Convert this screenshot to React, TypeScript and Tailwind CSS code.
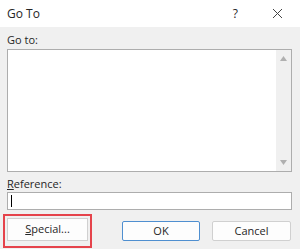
export default function App() {
  return (
    <div
      className="flex h-[249px] w-[300px] flex-col overflow-hidden bg-[#f0f0f0] text-[#262626]"
      style={{ fontFamily: '"Open Sans", "Noto Sans", sans-serif' }}
    >
      {/* title bar */}
      <div className="flex h-[27px] shrink-0 items-center bg-white pl-[7px]">
        <span className="text-[12px]">Go To</span>
        <span className="ml-auto mr-[34px] text-[12px]">?</span>
        <svg width="11" height="11" viewBox="0 0 11 11" className="mr-[17px]">
          <path d="M1 1L10 10M10 1L1 10" stroke="#444" strokeWidth="1" />
        </svg>
      </div>

      <div className="flex flex-col pl-[7px] pr-[8px] pt-[5px]">
        <span className="h-[15px] text-[11px] leading-[15px]">Go to:</span>

        {/* list box */}
        <div className="mt-[2px] flex h-[123px] border border-[#adadad] bg-white">
          <div className="flex-1" />
          <div className="flex w-[15px] flex-col items-center justify-between bg-[#f0f0f0] py-[6px]">
            <svg width="7" height="5" viewBox="0 0 7 5">
              <path d="M3.5 0L7 5H0Z" fill="#b0b0b0" />
            </svg>
            <svg width="7" height="5" viewBox="0 0 7 5">
              <path d="M0 0H7L3.5 5Z" fill="#b0b0b0" />
            </svg>
          </div>
        </div>

        <span className="mt-[4px] h-[15px] text-[11px] leading-[15px]">
          <span className="underline">R</span>eference:
        </span>

        {/* reference input */}
        <div className="mt-[1px] flex h-[18px] items-center border border-[#adadad] bg-white pl-[3px]">
          <div className="h-[12px] w-px bg-black" />
        </div>

        {/* buttons */}
        <div className="mt-[4px] flex items-start">
          <div className="-ml-[4px] h-[34px] w-[89px] border-2 border-[#e5434b] pl-[2px] pt-[2px]">
            <button className="flex h-[23px] w-[81px] items-center justify-center border border-[#d0d0d0] bg-[#fdfdfd] text-[11px]">
              <span>
                <span className="underline">S</span>pecial...
              </span>
            </button>
          </div>
          <button className="ml-[30px] mt-[7px] flex h-[20px] w-[78px] items-center justify-center rounded-[2px] border border-[#4f8fd0] bg-[#fdfdfd] text-[11px]">
            OK
          </button>
          <button className="ml-[12px] mt-[7px] flex h-[20px] w-[79px] items-center justify-center rounded-[2px] border border-[#d0d0d0] bg-[#fdfdfd] text-[11px]">
            Cancel
          </button>
        </div>
      </div>
    </div>
  );
}
